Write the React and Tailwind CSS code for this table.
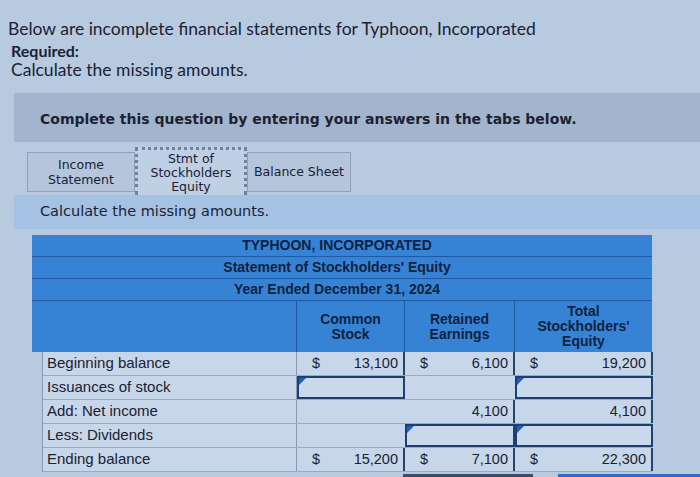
import React from 'react';

const rows = [
  { label: 'Beginning balance', cells: [{ d: true, v: '13,100' }, { d: true, v: '6,100' }, { d: true, v: '19,200' }] },
  { label: 'Issuances of stock', cells: [{ input: true }, {}, { input: true }] },
  { label: 'Add: Net income', cells: [{}, { v: '4,100' }, { v: '4,100' }] },
  { label: 'Less: Dividends', cells: [{}, { input: true }, { input: true }] },
  { label: 'Ending balance', cells: [{ d: true, v: '15,200' }, { d: true, v: '7,100' }, { d: true, v: '22,300' }] },
];

function Cell({ cell }) {
  if (cell.input) {
    return (
      <div className="relative h-full border-2 border-[#1d3f73] bg-[#c9d8ea]">
        <span className="absolute left-0 top-0 w-0 h-0 border-t-[7px] border-t-[#1f5fb5] border-r-[7px] border-r-transparent" />
      </div>
    );
  }
  return (
    <div className={`h-full flex items-center justify-between px-[5px] text-[14.5px] ${cell.v ? 'border-r-2 border-r-[#27426b]' : ''}`}>
      <span className="pl-[10px]">{cell.d ? '$' : ''}</span>
      <span>{cell.v || ''}</span>
    </div>
  );
}

export default function App() {
  return (
    <div className="w-[700px] h-[477px] overflow-hidden bg-[#b8cae0] font-['Lato',sans-serif] text-[#1a2233]">
      <div className="pt-[19px] px-[8px]">
        <p className="text-[17.5px] leading-[20px]">Below are incomplete financial statements for Typhoon, Incorporated</p>
        <p className="mt-[2px] pl-[3px] text-[16px] font-bold leading-[19px]">Required:</p>
        <p className="pl-[3px] text-[17.5px] leading-[20px]">Calculate the missing amounts.</p>
      </div>

      <div className="ml-[14px] mt-[13px] h-[49px] bg-[#a3b5cc] pl-[26px] pt-[16px] font-['DejaVu_Sans',sans-serif] text-[14px] font-bold">
        Complete this question by entering your answers in the tabs below.
      </div>

      <div className="ml-[14px] pl-[13px] pt-[5px] flex items-end bg-[#b9cae0] font-['DejaVu_Sans',sans-serif] text-[12.5px]">
        <div className="w-[108px] h-[40px] mb-[3px] bg-[#b4c5dc] border border-[#8ea1bb] flex items-center justify-center text-center leading-[15px]">
          Income<br />Statement
        </div>
        <div className="w-[112px] h-[48px] bg-[#bfd0e5] border-x-[3px] border-t-[3px] border-dotted border-[#6f829c] flex items-center justify-center text-center leading-[14px]">
          Stmt of<br />Stockholders<br />Equity
        </div>
        <div className="w-[104px] h-[40px] mb-[3px] bg-[#b4c5dc] border border-[#8ea1bb] flex items-center justify-center">
          Balance Sheet
        </div>
      </div>

      <div className="ml-[14px] h-[34px] bg-[#a5c2e4] pl-[26px] flex items-center font-['DejaVu_Sans',sans-serif] text-[14.5px]">
        Calculate the missing amounts.
      </div>

      <div className="ml-[32px] mt-[6px] w-[620px] font-['Liberation_Sans',Arial,sans-serif]">
        <div className="bg-[#3683d6] text-[#10223f] font-bold text-[14px]">
          <div className="h-[22px] flex items-center justify-center border-b border-[#1e5aa3] pr-[10px]">TYPHOON, INCORPORATED</div>
          <div className="h-[22px] flex items-center justify-center border-b border-[#1e5aa3] pr-[10px]">Statement of Stockholders' Equity</div>
          <div className="h-[22px] flex items-center justify-center border-b border-[#1e5aa3] pr-[10px]">Year Ended December 31, 2024</div>
          <div className="grid grid-cols-[264px_108px_110px_138px] h-[51px]">
            <div />
            <div className="border-l border-[#1e5aa3] flex items-center justify-center text-center leading-[15px]">Common<br />Stock</div>
            <div className="border-l border-[#1e5aa3] flex items-center justify-center text-center leading-[15px]">Retained<br />Earnings</div>
            <div className="border-l border-[#1e5aa3] flex items-center justify-center text-center leading-[15px]">Total<br />Stockholders'<br />Equity</div>
          </div>
        </div>
        <div className="bg-[#c7d6e9] border-l border-[#8a9bb2] ml-[10px]">
          {rows.map((r) => (
            <div key={r.label} className="grid grid-cols-[254px_108px_110px_138px] h-[24px] border-b border-[#9aaac0]">
              <div className="flex items-center px-[4px] text-[15px] border-r border-[#8a9bb2]">{r.label}</div>
              {r.cells.map((c, i) => (
                <Cell key={i} cell={c} />
              ))}
            </div>
          ))}
        </div>
      </div>

      <div className="mt-[2px] flex justify-end gap-[25px] h-[10px]">
        <div className="w-[130px] bg-[#3a4e6c]" />
        <div className="w-[142px] bg-[#2c6cc6]" />
      </div>
    </div>
  );
}
